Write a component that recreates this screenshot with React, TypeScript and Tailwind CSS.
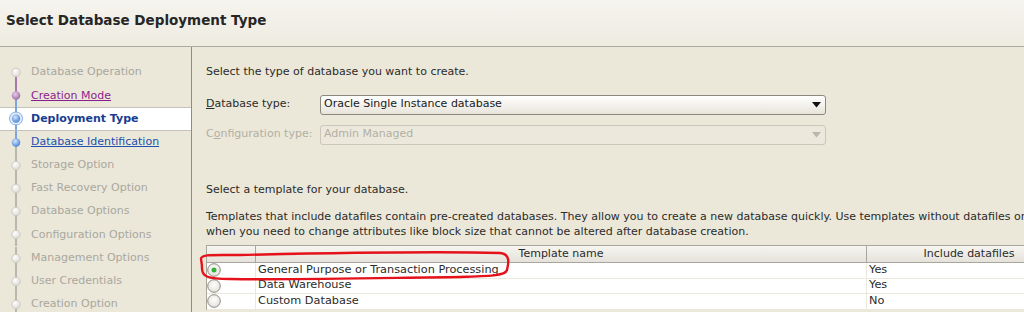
import React from "react";

type Step = { label: string; state: "done" | "visited" | "current" | "next" | "off" };

const steps: Step[] = [
  { label: "Database Operation", state: "done" },
  { label: "Creation Mode", state: "visited" },
  { label: "Deployment Type", state: "current" },
  { label: "Database Identification", state: "next" },
  { label: "Storage Option", state: "off" },
  { label: "Fast Recovery Option", state: "off" },
  { label: "Database Options", state: "off" },
  { label: "Configuration Options", state: "off" },
  { label: "Management Options", state: "off" },
  { label: "User Credentials", state: "off" },
  { label: "Creation Option", state: "off" },
];

const GRAY = "#b9b7ae";
const PURPLE = "#a57aab";
const BLUE = "#7da4dc";

function lineColors(i: number): [string, string] {
  // colour of segment above / below node i
  const seg = (k: number) => (k === 0 ? PURPLE : k === 1 || k === 2 ? BLUE : GRAY);
  return [i === 0 ? "transparent" : seg(i - 1), seg(i)];
}

function Node({ i, state }: { i: number; state: Step["state"] }) {
  const [top, bottom] = lineColors(i);
  return (
    <svg width="31" height="23" viewBox="0 0 31 23" className="shrink-0">
      <defs>
        <radialGradient id={`g-${i}`} cx="0.4" cy="0.35" r="0.7">
          {state === "visited" ? (
            <>
              <stop offset="0" stopColor="#e6cde9" />
              <stop offset="1" stopColor="#9c6aa3" />
            </>
          ) : state === "current" || state === "next" ? (
            <>
              <stop offset="0" stopColor="#d6e6fb" />
              <stop offset="1" stopColor="#3f7fd6" />
            </>
          ) : (
            <>
              <stop offset="0" stopColor="#ffffff" />
              <stop offset="1" stopColor="#d8d6ce" />
            </>
          )}
        </radialGradient>
      </defs>
      <rect x="15" y="0" width="2" height="11" fill={top} />
      <rect x="15" y="12" width="2" height="11" fill={bottom} />
      {state === "current" ? (
        <>
          <circle cx="16" cy="11.5" r="6.5" fill="#e3eefc" stroke="#88aee2" strokeWidth="1" />
          <circle cx="16" cy="11.5" r="4.2" fill={`url(#g-${i})`} />
        </>
      ) : (
        <circle cx="16" cy="11.5" r="4.3" fill={`url(#g-${i})`} stroke={state === "done" || state === "off" ? "#c9c7be" : "none"} strokeWidth="0.8" />
      )}
    </svg>
  );
}

function Nav() {
  return (
    <div className="w-[192px] shrink-0 border-r border-[#8f8c84] pt-[14px]">
      {steps.map((s, i) => {
        const text =
          s.state === "visited"
            ? "text-[#8b1e8e] underline"
            : s.state === "current"
            ? "text-[#173d91] font-bold"
            : s.state === "next"
            ? "text-[#2050b0] underline"
            : "text-[#a9a79e]";
        return (
          <div
            key={s.label}
            className={`flex h-[23.2px] items-center ${
              s.state === "current" ? "bg-white border-y border-[#c4c2ba]" : ""
            }`}
          >
            <Node i={i} state={s.state} />
            <span className={`text-[11px] whitespace-nowrap ${text}`}>{s.label}</span>
          </div>
        );
      })}
    </div>
  );
}

function Arrow({ color }: { color: string }) {
  return (
    <svg width="9" height="6" viewBox="0 0 9 6">
      <path d="M0 0 L9 0 L4.5 5.5 Z" fill={color} />
    </svg>
  );
}

function Radio({ checked }: { checked?: boolean }) {
  return (
    <svg width="14" height="14" viewBox="0 0 14 14">
      <defs>
        <radialGradient id={checked ? "rc" : "ru"} cx="0.5" cy="0.4" r="0.6">
          <stop offset="0" stopColor="#ffffff" />
          <stop offset="1" stopColor="#e2e0d8" />
        </radialGradient>
      </defs>
      <circle cx="7" cy="7" r="6.3" fill={`url(#${checked ? "rc" : "ru"})`} stroke="#8e8c84" strokeWidth="1" />
      {checked && <circle cx="7" cy="7" r="2.5" fill="#35b13a" />}
    </svg>
  );
}

const rows = [
  { name: "General Purpose or Transaction Processing", inc: "Yes", checked: true },
  { name: "Data Warehouse", inc: "Yes" },
  { name: "Custom Database", inc: "No" },
];

function Content() {
  return (
    <div className="relative flex-1 overflow-hidden pl-[14px] text-[11px] text-[#2b2b2b]">
      <div className="mt-[18px] h-[14px] leading-[14px]">Select the type of database you want to create.</div>

      <div className="mt-[16px] flex h-[19px] items-center">
        <span className="w-[114px]">
          <span className="underline">D</span>atabase type:
        </span>
        <div className="flex h-[20px] w-[506px] items-center justify-between rounded-[3px] border border-[#8b887f] bg-gradient-to-b from-white to-[#e7e4da] pl-[3px] pr-[4px] text-[#202020]">
          <span>Oracle Single Instance database</span>
          <Arrow color="#111" />
        </div>
      </div>

      <div className="mt-[11px] flex h-[19px] items-center text-[#b2afa5]">
        <span className="w-[114px]">
          C<span className="underline">o</span>nfiguration type:
        </span>
        <div className="flex h-[20px] w-[506px] items-center justify-between rounded-[3px] border border-[#cac7bd] bg-[#ece9dc] pl-[3px] pr-[4px]">
          <span>Admin Managed</span>
          <Arrow color="#b9b6ad" />
        </div>
      </div>

      <div className="mt-[39px] h-[14px] leading-[14px]">Select a template for your database.</div>

      <div className="mt-[12px] whitespace-nowrap leading-[15px]">
        <div>
          Templates that include datafiles contain pre-created databases. They allow you to create a new database quickly. Use templates without datafiles only
        </div>
        <div>when you need to change attributes like block size that cannot be altered after database creation.</div>
      </div>

      <div className="mt-[6px] w-[870px] border-l border-t border-[#a9a69d] bg-white">
        <div className="flex h-[17px] border-b border-[#a9a69d] bg-gradient-to-b from-[#f6f5f0] to-[#e4e2da]">
          <div className="w-[49px] border-r border-[#a9a69d]" />
          <div className="flex w-[611px] items-center justify-center border-r border-[#a9a69d]">Template name</div>
          <div className="flex w-[204px] items-center justify-center">Include datafiles</div>
        </div>
        {rows.map((r) => (
          <div key={r.name} className="flex h-[15.6px] border-b border-[#ebe8de] text-[11.3px]">
            <div className="flex w-[49px] items-center border-r border-[#ebe8de]">
              <Radio checked={r.checked} />
            </div>
            <div className="flex w-[611px] items-center pl-[2px] border-r border-[#ebe8de]">{r.name}</div>
            <div className="flex w-[204px] items-center pl-[2px]">{r.inc}</div>
          </div>
        ))}
      </div>
    </div>
  );
}

export default function App() {
  return (
    <div
      className="relative h-[312px] w-[1024px] overflow-hidden bg-[#ebe8d9]"
      style={{ fontFamily: "'DejaVu Sans', Verdana, sans-serif" }}
    >
      <div className="flex h-[47px] items-center border-b border-[#aeaba3] bg-gradient-to-b from-[#f5f4ee] to-[#eeebe1] pb-[5px] pl-[6px]">
        <h1 className="text-[13.5px] font-bold text-[#262626]">Select Database Deployment Type</h1>
      </div>
      <div className="flex h-[265px]">
        <Nav />
        <Content />
      </div>
      <svg className="pointer-events-none absolute left-0 top-0" width="1024" height="312" viewBox="0 0 1024 312">
        <path
          d="M201 259 C201 254 212 255 240 255 C330 253 430 251 500 253 C510 254 509 262 507 270 C505 276 490 276 460 277 C380 278 300 280 230 279 C206 279 202 276 202 268 C202 263 201 260 201 259"
          fill="none"
          stroke="#e5121b"
          strokeWidth="2.4"
        />
      </svg>
    </div>
  );
}
